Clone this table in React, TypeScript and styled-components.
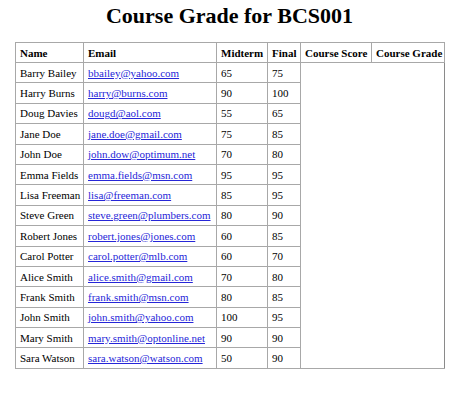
import React from "react";
import styled, { createGlobalStyle } from "styled-components";

const serif = `"Liberation Serif", "Times New Roman", Times, serif`;

const Global = createGlobalStyle`
  body { margin: 0; background: #fff; color: #000; font-family: ${serif}; }
`;

const Wrapper = styled.div`
  width: 429px;
  margin-left: 15px;
  padding-top: 3px;
`;

const Title = styled.h1`
  margin: 0 0 13px;
  font-family: ${serif};
  font-size: 22px;
  line-height: 26px;
  font-weight: bold;
  text-align: center;
`;

const Table = styled.table`
  width: 429px;
  table-layout: fixed;
  border-collapse: collapse;
  border: 1px solid #8a8a8a;
  font-family: ${serif};
  font-size: 11px;
`;

const Head = styled.th`
  text-align: left;
  font-weight: bold;
  padding: 0 4px;
  height: 19px;
  border: 1px solid #a8a8a8;
  white-space: nowrap;
  overflow: hidden;
`;

const Cell = styled.td`
  padding: 0 4px;
  height: 19.4px;
  border: 1px solid #a8a8a8;
  white-space: nowrap;
  overflow: hidden;
`;

const Blank = styled.td`
  border: 1px solid #a8a8a8;
  border-right-color: #8a8a8a;
`;

const Mail = styled.a`
  color: #2626d8;
  text-decoration: underline;
`;

const rows: [string, string, number, number][] = [
  ["Barry Bailey", "bbailey@yahoo.com", 65, 75],
  ["Harry Burns", "harry@burns.com", 90, 100],
  ["Doug Davies", "dougd@aol.com", 55, 65],
  ["Jane Doe", "jane.doe@gmail.com", 75, 85],
  ["John Doe", "john.dow@optimum.net", 70, 80],
  ["Emma Fields", "emma.fields@msn.com", 95, 95],
  ["Lisa Freeman", "lisa@freeman.com", 85, 95],
  ["Steve Green", "steve.green@plumbers.com", 80, 90],
  ["Robert Jones", "robert.jones@jones.com", 60, 85],
  ["Carol Potter", "carol.potter@mlb.com", 60, 70],
  ["Alice Smith", "alice.smith@gmail.com", 70, 80],
  ["Frank Smith", "frank.smith@msn.com", 80, 85],
  ["John Smith", "john.smith@yahoo.com", 100, 95],
  ["Mary Smith", "mary.smith@optonline.net", 90, 90],
  ["Sara Watson", "sara.watson@watson.com", 50, 90],
];

export default function App() {
  return (
    <>
      <Global />
      <Wrapper>
        <Title>Course Grade for BCS001</Title>
        <Table>
          <colgroup>
            <col style={{ width: 68 }} />
            <col style={{ width: 133 }} />
            <col style={{ width: 51 }} />
            <col style={{ width: 33 }} />
            <col style={{ width: 71 }} />
            <col style={{ width: 73 }} />
          </colgroup>
          <thead>
            <tr>
              <Head>Name</Head>
              <Head>Email</Head>
              <Head>Midterm</Head>
              <Head>Final</Head>
              <Head>Course Score</Head>
              <Head>Course Grade</Head>
            </tr>
          </thead>
          <tbody>
            {rows.map(([name, email, mid, fin], i) => (
              <tr key={name}>
                <Cell>{name}</Cell>
                <Cell>
                  <Mail href={`mailto:${email}`}>{email}</Mail>
                </Cell>
                <Cell>{mid}</Cell>
                <Cell>{fin}</Cell>
                {i === 0 && <Blank colSpan={2} rowSpan={rows.length} />}
              </tr>
            ))}
          </tbody>
        </Table>
      </Wrapper>
    </>
  );
}
